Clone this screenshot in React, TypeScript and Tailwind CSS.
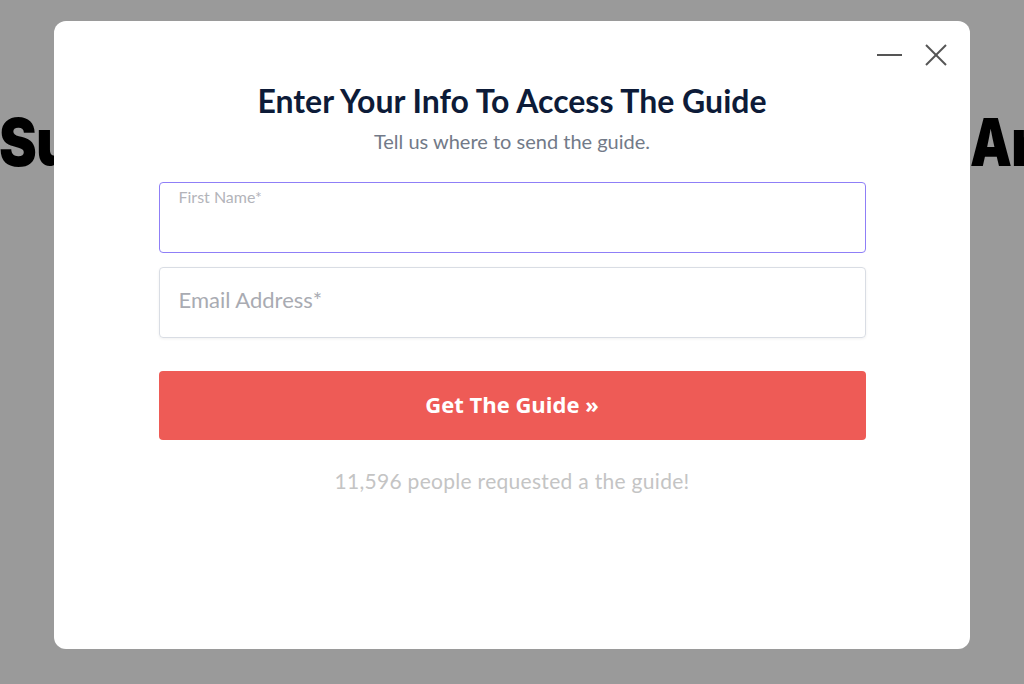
// Background page content sitting behind the popup
function PageBehind() {
    return (
        <div className="flex whitespace-nowrap pt-[102px] text-[66px] font-black leading-[80px] tracking-[-1px] text-black [font-family:Inter,'Liberation_Sans',sans-serif]">
            <span className="-ml-[1px] origin-left scale-x-[0.86]">Success Stories</span>
            <span className="ml-auto w-[54px] origin-left scale-x-[0.8]">Around</span>
        </div>
    );
}

function WindowControls() {
    return (
        <div className="absolute right-[22px] top-[22px] flex items-center gap-[21px]">
            <svg width="27" height="24" viewBox="0 0 27 24" fill="none">
                <line x1="1" y1="12" x2="26" y2="12" stroke="#555" strokeWidth="2" />
            </svg>
            <svg width="24" height="24" viewBox="0 0 24 24" fill="none">
                <line x1="2" y1="2" x2="22" y2="22" stroke="#555" strokeWidth="2" />
                <line x1="22" y1="2" x2="2" y2="22" stroke="#555" strokeWidth="2" />
            </svg>
        </div>
    );
}

function OptinModal() {
    return (
        <div className="absolute left-[54px] top-[21px] h-[628px] w-[916px] rounded-[12px] bg-white [font-family:Lato,'Noto_Sans',sans-serif]">
            <WindowControls />

            <div className="mx-auto flex w-[707px] flex-col items-center pt-[60px]">
                <h2 className="text-[32px] font-bold leading-[40px] text-[#0d1b38]">
                    Enter Your Info To Access The Guide
                </h2>
                <p className="mt-[6px] text-[20px] leading-[28px] text-[#727a88]">
                    Tell us where to send the guide.
                </p>

                {/* focused field */}
                <div className="mt-[27px] flex h-[71px] w-full flex-col rounded-[4px] border-[1.5px] border-[#8f7ff7] px-[19px] pt-[3px]">
                    <span className="text-[16px] leading-[22px] text-[#b3b4ba]">
                        First Name*
                    </span>
                </div>

                <div className="mt-[14px] flex h-[71px] w-full items-center rounded-[4px] border border-[#d9dde4] px-[19px] pb-[6px] shadow-[0_1px_3px_rgba(0,0,0,0.06)]">
                    <span className="text-[22px] leading-[28px] text-[#a9abb2]">
                        Email Address*
                    </span>
                </div>

                <button className="mt-[33px] flex h-[69px] w-full items-center justify-center rounded-[4px] bg-[#ee5b56] pb-[2px] text-[22px] font-bold text-white [font-family:'Open_Sans',sans-serif]">
                    Get The Guide »
                </button>

                <p className="mt-[27px] text-[21px] leading-[28px] tracking-[0.3px] text-[#c4c4c4]">
                    11,596 people requested a the guide!
                </p>
            </div>
        </div>
    );
}

export default function App() {
    return (
        <div className="relative h-[684px] w-full overflow-hidden bg-[#9a9a9a]">
            <PageBehind />
            <OptinModal />
        </div>
    );
}
